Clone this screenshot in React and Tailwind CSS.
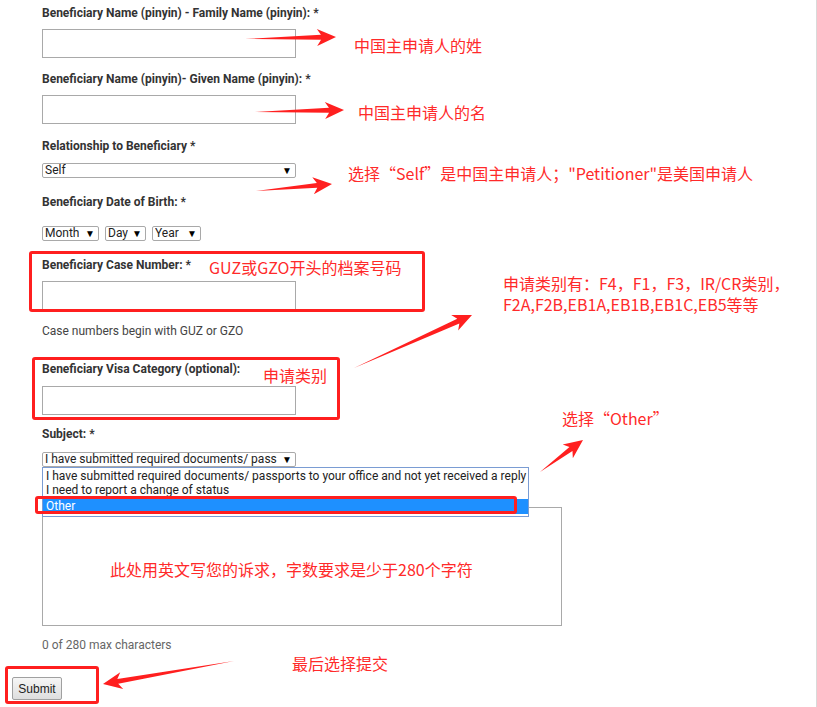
import React from 'react';

const formFont = { fontFamily: 'Roboto, "Noto Sans", "Liberation Sans", sans-serif' };
const cjkFont = { fontFamily: '"Noto Sans CJK SC", "Noto Sans", sans-serif' };

// arrow shape: thin tail widening into a head at the tip
const arrowPoints = (x1, y1, x2, y2) => {
  const dx = x2 - x1;
  const dy = y2 - y1;
  const len = Math.hypot(dx, dy);
  const ux = dx / len;
  const uy = dy / len;
  const px = -uy;
  const py = ux;
  const pt = (a, b) => `${x1 + ux * a + px * b},${y1 + uy * a + py * b}`;
  return [
    pt(0, 0),
    pt(len - 15, -2.5),
    pt(len - 19, -8.5),
    pt(len, 0),
    pt(len - 19, 8.5),
    pt(len - 15, 2.5),
  ].join(' ');
};

const arrows = [
  [245, 39, 336, 37],
  [255, 112, 344, 110],
  [256, 191, 332, 184],
  [354, 368, 472, 315],
  [540, 472, 583, 440],
  [234, 661, 103, 684],
];

const notes = [
  { x: 354, y: 45, t: ['中国主申请人的姓'] },
  { x: 358, y: 112, t: ['中国主申请人的名'] },
  { x: 348, y: 173, t: ['选择“Self”是中国主申请人；"Petitioner"是美国申请人'] },
  { x: 209, y: 267, t: ['GUZ或GZO开头的档案号码'] },
  { x: 263, y: 375, t: ['申请类别'] },
  { x: 503, y: 283, t: ['申请类别有：F4，F1，F3，IR/CR类别，', 'F2A,F2B,EB1A,EB1B,EB1C,EB5等等'], lh: 21 },
  { x: 562, y: 418, t: ['选择“Other”'] },
  { x: 110, y: 569, t: ['此处用英文写您的诉求，字数要求是少于280个字符'] },
  { x: 292, y: 663, t: ['最后选择提交'] },
];

const boxes = [
  { x: 29, y: 251, w: 396, h: 61 },
  { x: 32, y: 357, w: 308, h: 63 },
  { x: 35, y: 496, w: 482, h: 18 },
  { x: 5, y: 666, w: 94, h: 38 },
];

const Label = ({ children, className = '' }) => (
  <div className={`text-[12px] leading-[14px] font-bold text-[#333] ${className}`}>{children}</div>
);

const TextBox = ({ className = '' }) => (
  <div className={`w-[254px] h-[29px] border border-[#a9a9a9] bg-white ${className}`} />
);

const FakeSelect = ({ value, className = '' }) => (
  <div
    className={`flex items-center justify-between h-[15px] border border-[#a9a9a9] rounded-[2px] bg-white pl-[2px] pr-[3px] text-[12px] leading-[13px] text-[#222] ${className}`}
  >
    <span className="whitespace-nowrap overflow-hidden">{value}</span>
    <span className="text-[10px] leading-none text-black">▼</span>
  </div>
);

export default function App() {
  return (
    <div className="relative w-[817px] h-[707px] overflow-hidden bg-white border-r border-[#d9d9d9]" style={formFont}>
      <div className="pl-[42px] pt-[6px]">
        <Label>Beneficiary Name (pinyin) - Family Name (pinyin): *</Label>
        <TextBox className="mt-[9px]" />

        <Label className="mt-[14px]">Beneficiary Name (pinyin)- Given Name (pinyin): *</Label>
        <TextBox className="mt-[9px]" />

        <Label className="mt-[15px]">Relationship to Beneficiary *</Label>
        <FakeSelect value="Self" className="mt-[10px] w-[254px]" />

        <Label className="mt-[17px]">Beneficiary Date of Birth: *</Label>
        <div className="mt-[17px] flex gap-[6px]">
          <FakeSelect value="Month" className="w-[57px] h-[14px]" />
          <FakeSelect value="Day" className="w-[41px] h-[14px]" />
          <FakeSelect value="Year" className="w-[49px] h-[14px]" />
        </div>

        <Label className="mt-[17px]">Beneficiary Case Number: *</Label>
        <TextBox className="mt-[9px] h-[28px]" />
        <div className="mt-[14px] text-[12px] leading-[14px] text-[#444]">Case numbers begin with GUZ or GZO</div>

        <Label className="mt-[24px]">Beneficiary Visa Category (optional):</Label>
        <TextBox className="mt-[10px] h-[28px]" />

        <Label className="mt-[12px]">Subject: *</Label>
        <div className="relative mt-[11px]">
          <FakeSelect value="I have submitted required documents/ pass" className="w-[254px] border-[#7a9cd3]" />
          <div className="absolute left-0 top-[15px] z-10 w-[487px] h-[50px] border border-[#7a9cd3] bg-white text-[12px] leading-[14px] text-[#222] pt-[1px]">
            <div className="pl-[3px] whitespace-nowrap">I have submitted required documents/ passports to your office and not yet received a reply</div>
            <div className="pl-[3px] whitespace-nowrap">I need to report a change of status</div>
            <div className="mt-[2px] pl-[3px] h-[15px] leading-[15px] bg-[#1e90ff] text-white">Other</div>
          </div>
        </div>
        <div className="mt-[40px] w-[520px] h-[119px] border border-[#a9a9a9] bg-white" />
        <div className="mt-[12px] text-[12px] leading-[14px] text-[#666]">0 of 280 max characters</div>

        <button
          className="ml-[-30px] mt-[25px] w-[50px] h-[23px] border border-[#a0a0a0] rounded-[2px] bg-gradient-to-b from-[#f6f6f6] to-[#dedede] text-[12px] text-[#222]"
          style={{ fontFamily: '"Liberation Sans", Arial, sans-serif' }}
        >
          Submit
        </button>
      </div>

      {boxes.map((b, i) => (
        <div
          key={i}
          className="absolute z-20 border-[3px] border-[#ff1f1f] rounded-[3px]"
          style={{ left: b.x, top: b.y, width: b.w, height: b.h }}
        />
      ))}

      <svg className="absolute inset-0 z-20 pointer-events-none" width="817" height="707">
        {arrows.map((a, i) => (
          <polygon key={i} points={arrowPoints(...a)} fill="#ff1f1f" />
        ))}
      </svg>

      {notes.map((n, i) => {
        const lh = n.lh || 18;
        return (
          <div
            key={i}
            className="absolute z-20 whitespace-nowrap text-[16px] text-[#ff2a2a]"
            style={{ ...cjkFont, left: n.x, top: n.y - lh / 2, lineHeight: `${lh}px` }}
          >
            {n.t.map((line, j) => (
              <React.Fragment key={j}>
                {j > 0 && <br />}
                {line}
              </React.Fragment>
            ))}
          </div>
        );
      })}
    </div>
  );
}
